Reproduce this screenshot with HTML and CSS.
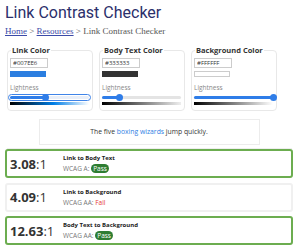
FILE: index.html
```html
<!DOCTYPE html>
<html lang="en">

<head>
     <meta charset="UTF-8">
     <meta name="viewport" content="width=device-width, initial-scale=1.0">
     <title>Link Contrast Checker</title>
     <link rel="stylesheet" href="styles.css">
</head>

<body>
     <main class="page">
          <h1>Link Contrast Checker</h1>
          <p class="crumbs"><a href="#">Home</a> &gt; <a href="#">Resources</a> &gt; Link Contrast Checker</p>

          <section class="pickers">
               <fieldset class="picker">
                    <legend>Link Color</legend>
                    <input class="hex" type="text" value="#007EE6">
                    <div class="swatch swatch-link"></div>
                    <label class="lbl">Lightness</label>
                    <div class="slider focused">
                         <div class="fill" style="width:45%"></div>
                         <span class="thumb" style="left:45%"></span>
                    </div>
                    <div class="ramp ramp-link"></div>
               </fieldset>

               <fieldset class="picker">
                    <legend>Body Text Color</legend>
                    <input class="hex" type="text" value="#333333">
                    <div class="swatch swatch-body"></div>
                    <label class="lbl">Lightness</label>
                    <div class="slider">
                         <div class="fill" style="width:22%"></div>
                         <span class="thumb" style="left:22%"></span>
                    </div>
                    <div class="ramp ramp-body"></div>
               </fieldset>

               <fieldset class="picker">
                    <legend>Background Color</legend>
                    <input class="hex" type="text" value="#FFFFFF">
                    <div class="swatch swatch-bg"></div>
                    <label class="lbl">Lightness</label>
                    <div class="slider">
                         <div class="fill" style="width:100%"></div>
                         <span class="thumb" style="left:100%"></span>
                    </div>
                    <div class="ramp ramp-bg"></div>
               </fieldset>
          </section>

          <div class="sample">The five <a href="#">boxing wizards</a> jump quickly.</div>

          <hr class="divider">

          <section class="results">
               <div class="result ok">
                    <div class="ratio"><b>3.08</b>:1</div>
                    <div class="info">
                         <strong>Link to Body Text</strong>
                         <span>WCAG A: <em class="pass">Pass</em></span>
                    </div>
               </div>
               <div class="result">
                    <div class="ratio"><b>4.09</b>:1</div>
                    <div class="info">
                         <strong>Link to Background</strong>
                         <span>WCAG AA: <em class="fail">Fail</em></span>
                    </div>
               </div>
               <div class="result ok">
                    <div class="ratio"><b>12.63</b>:1</div>
                    <div class="info">
                         <strong>Body Text to Background</strong>
                         <span>WCAG AA: <em class="pass">Pass</em></span>
                    </div>
               </div>
          </section>
     </main>
</body>

</html>
```

FILE: styles.css
```css
body {
     margin: 0;
     padding: 0;
     font-family: "Open Sans", sans-serif;
     background-color: #fff;
     color: #333;
}

.page {
     padding: 0 7px 0 5px;
}

h1 {
     font-family: Roboto, sans-serif;
     font-weight: 400;
     font-size: 16px;
     line-height: 20px;
     color: #2b2f6b;
     margin: 3px 0 0;
}

.crumbs {
     font-family: "Liberation Serif", serif;
     font-size: 9px;
     line-height: 11px;
     color: #555;
     margin: 3px 0 0;
}

.crumbs a {
     color: #3b4aa8;
}

.pickers {
     display: flex;
     gap: 6px;
     margin: 8px 0 0 2px;
}

.picker {
     width: 86px;
     box-sizing: border-box;
     margin: 0;
     padding: 3px 3px 5px 2px;
     border: 1px solid #e8e8e8;
     border-radius: 4px;
     display: flex;
     flex-direction: column;
     align-items: flex-start;
}

.picker legend {
     font-size: 7.5px;
     font-weight: 700;
     line-height: 10px;
     padding: 0 1px;
     margin-left: 1px;
     color: #333;
}

.hex {
     width: 38px;
     height: 10px;
     box-sizing: border-box;
     border: 1px solid #ccc;
     padding: 0 2px;
     margin: 0;
     font-family: "Open Sans", sans-serif;
     font-size: 6px;
     color: #333;
}

.swatch {
     width: 36px;
     height: 6px;
     margin-top: 3px;
     box-sizing: border-box;
}

.swatch-link {
     background-color: #2b7ee0;
}

.swatch-body {
     background-color: #333;
}

.swatch-bg {
     background-color: #fff;
     border: 1px solid #ccc;
}

.lbl {
     font-size: 6.5px;
     line-height: 9px;
     color: #888;
     margin-top: 6px;
}

.slider {
     position: relative;
     width: 100%;
     height: 3px;
     margin-top: 4px;
     background-color: #e4e4e4;
     border-radius: 2px;
}

.slider .fill {
     height: 100%;
     background-color: #2f7de8;
     border-radius: 2px;
}

.slider .thumb {
     position: absolute;
     top: -2px;
     width: 7px;
     height: 7px;
     margin-left: -3.5px;
     border-radius: 50%;
     background-color: #2f7de8;
}

.slider.focused {
     outline: 1px solid #3f84e8;
     outline-offset: 1px;
     background-color: #e8eef8;
}

.ramp {
     width: 100%;
     height: 3px;
     margin-top: 3px;
}

.ramp-link {
     background: linear-gradient(to right, #000, #007ee6 55%, #fff);
}

.ramp-body {
     background: linear-gradient(to right, #000, #eee);
}

.ramp-bg {
     background: linear-gradient(to right, #000, #fff);
}

.sample {
     width: 221px;
     height: 26px;
     box-sizing: border-box;
     margin: 8px auto 0;
     border: 1px solid #ececec;
     font-size: 6.8px;
     line-height: 24px;
     text-align: center;
     color: #333;
}

.sample a {
     color: #2f80e4;
     text-decoration: none;
}

.divider {
     border: 0;
     border-top: 1px solid #eee;
     margin: 3px 1px 0 2px;
}

.results {
     display: flex;
     flex-direction: column;
     gap: 4.5px;
}

.result {
     display: flex;
     align-items: center;
     height: 29px;
     box-sizing: border-box;
     border: 2px solid #f0f0f0;
     border-radius: 3px;
}

.result.ok {
     border-color: #6cad50;
}

.ratio {
     width: 56px;
     box-sizing: border-box;
     padding-left: 3px;
     font-size: 13px;
     color: #333;
     white-space: nowrap;
}

.info {
     display: flex;
     flex-direction: column;
     gap: 2px;
}

.info strong {
     font-size: 6px;
     line-height: 8px;
     color: #222;
}

.info span {
     font-size: 6.5px;
     line-height: 9px;
     color: #777;
}

.info em {
     font-style: normal;
}

.pass {
     background-color: #2e7d32;
     color: #fff;
     border-radius: 5px;
     padding: 0 2px;
}

.fail {
     color: #e53935;
}
```
